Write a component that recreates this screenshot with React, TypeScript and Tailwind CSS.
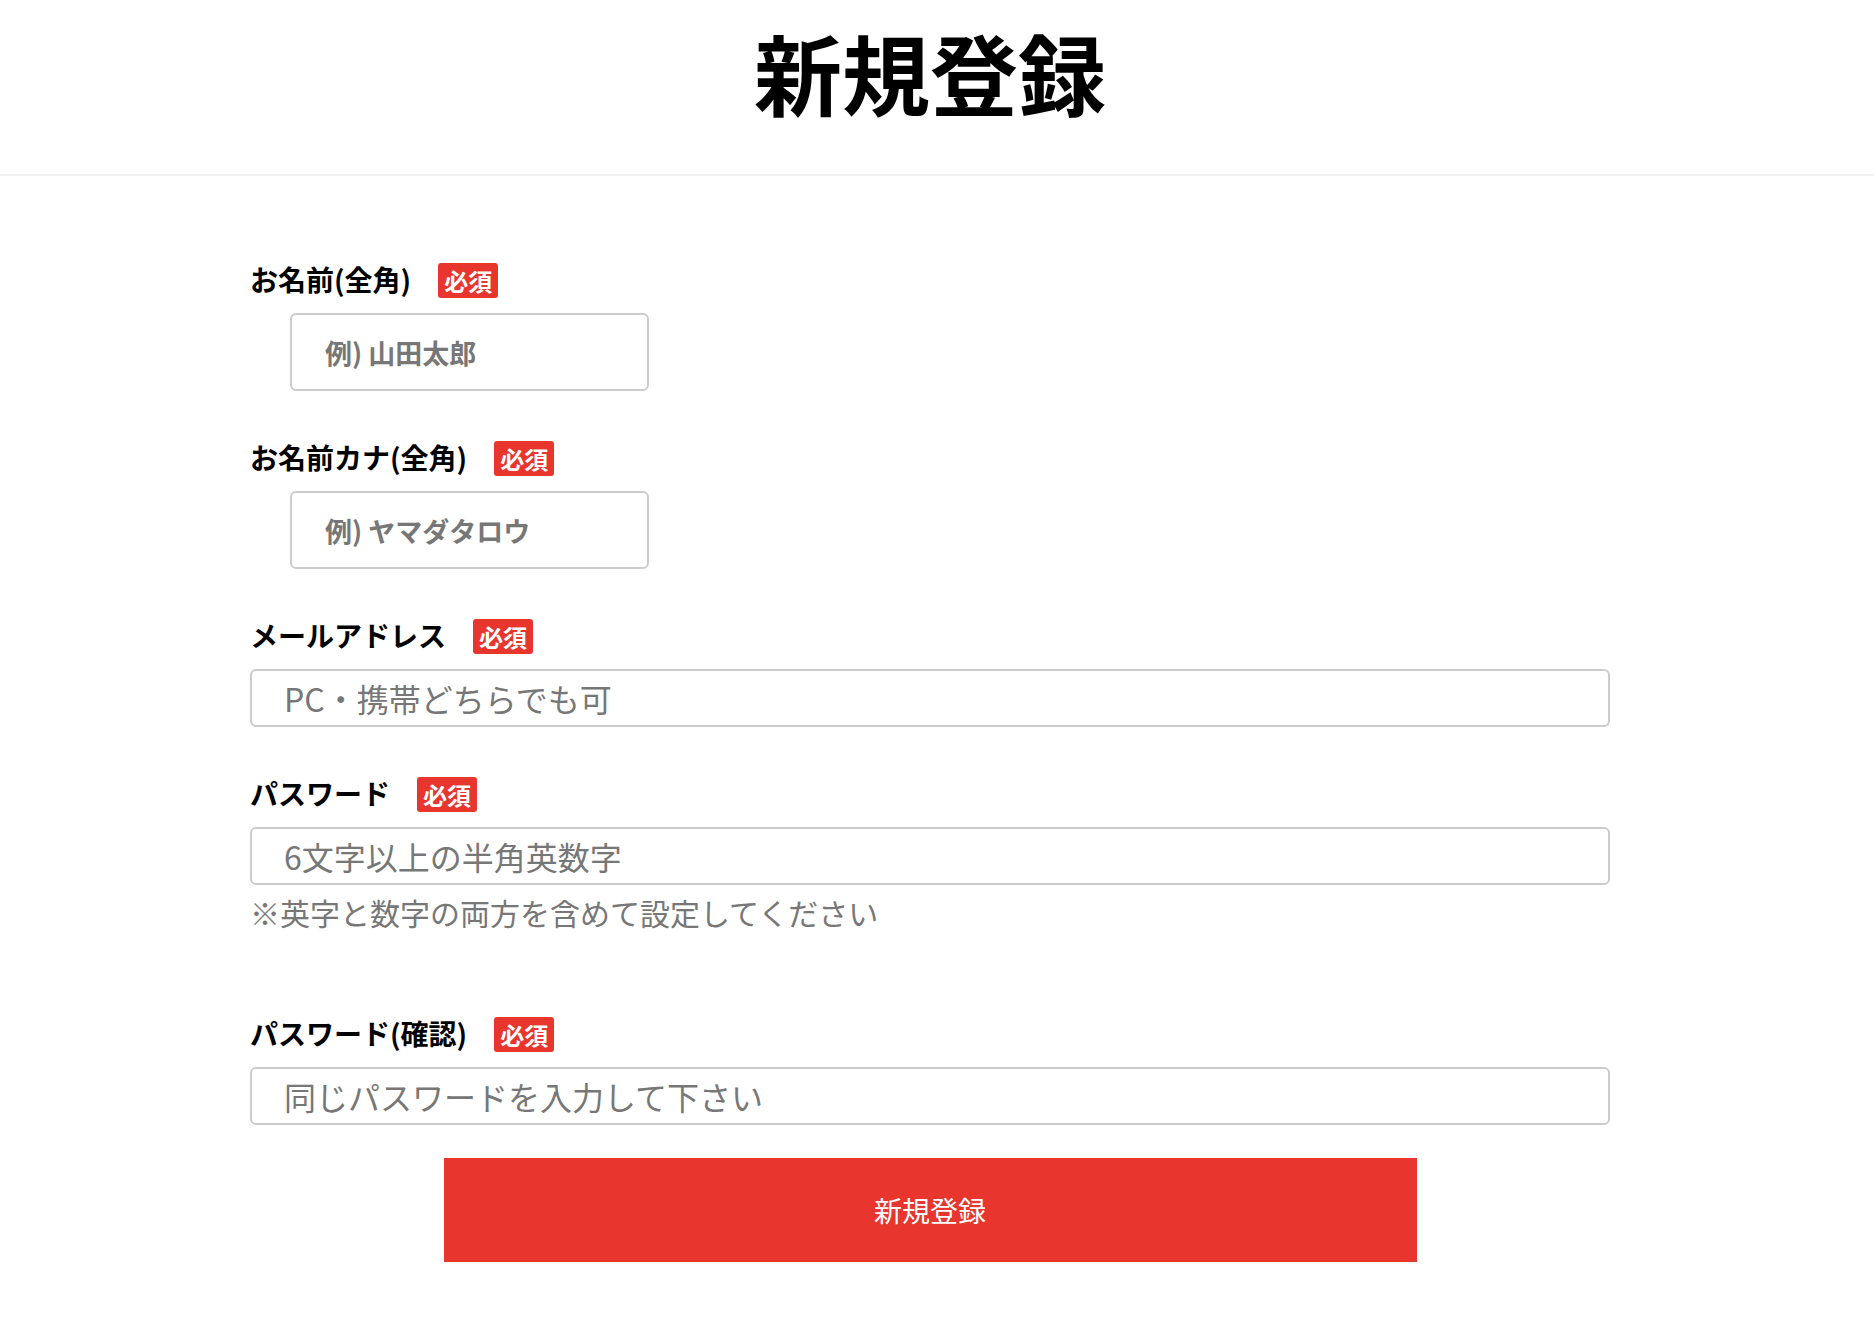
import React from 'react';

function RequiredLabel({ text }: { text: string }) {
  return (
    <div className="flex h-[35px] items-center gap-[27px]">
      <span className="pb-[3px] text-[28px] font-bold leading-none text-black">{text}</span>
      <span className="flex h-[35px] items-center rounded-[3px] bg-[#e8352e] px-[6px] text-[24px] font-bold leading-none text-white">
        必須
      </span>
    </div>
  );
}

export default function App() {
  const smallInput =
    'mt-[15px] ml-[40px] block h-[78px] w-[359px] rounded-[6px] border-2 border-[#cccccc] bg-white px-[33px] text-[27px] font-semibold text-[#333] outline-none placeholder:text-[#777]';
  const wideInput =
    'mt-[15px] block h-[58px] w-full rounded-[6px] border-2 border-[#cccccc] bg-white px-[32px] text-[32px] text-[#333] outline-none placeholder:text-[#777]';

  return (
    <div className="min-h-screen bg-white font-['Noto_Sans_CJK_JP','Noto_Sans',sans-serif] text-black">
      <header className="h-[176px] border-b-2 border-[#f3f3f3] pt-[27px] pr-[14px]">
        <h1 className="text-center text-[88px] font-bold leading-[88px]">新規登録</h1>
      </header>

      <div className="flex justify-center pr-[14px]">
        <form className="w-[1360px] pt-[87px] pb-[82px]" onSubmit={(e) => e.preventDefault()}>
          {/* name */}
          <RequiredLabel text="お名前(全角)" />
          <input type="text" className={smallInput} placeholder="例) 山田太郎" />

          {/* kana */}
          <div className="mt-[50px]">
            <RequiredLabel text="お名前カナ(全角)" />
            <input type="text" className={smallInput} placeholder="例) ヤマダタロウ" />
          </div>

          {/* email */}
          <div className="mt-[50px]">
            <RequiredLabel text="メールアドレス" />
            <input type="email" className={wideInput} placeholder="PC・携帯どちらでも可" />
          </div>

          {/* password */}
          <div className="mt-[50px]">
            <RequiredLabel text="パスワード" />
            <input type="password" className={wideInput} placeholder="6文字以上の半角英数字" />
            <p className="mt-[12px] text-[30px] leading-[30px] text-[#777]">
              ※英字と数字の両方を含めて設定してください
            </p>
          </div>

          {/* password confirm */}
          <div className="mt-[90px]">
            <RequiredLabel text="パスワード(確認)" />
            <input type="password" className={wideInput} placeholder="同じパスワードを入力して下さい" />
          </div>

          <button
            type="submit"
            className="mx-auto mt-[33px] block h-[104px] w-[973px] bg-[#e8352e] text-[28px] font-normal text-white"
          >
            新規登録
          </button>
        </form>
      </div>
    </div>
  );
}
